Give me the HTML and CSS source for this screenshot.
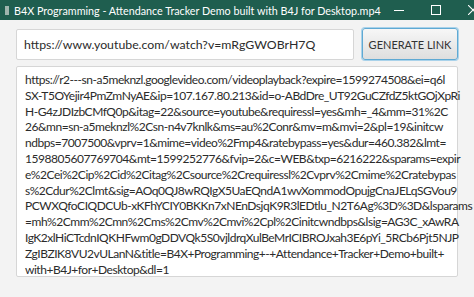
FILE: index.html
```html
<!DOCTYPE html>
<html lang="en">
<head>
    <meta charset="UTF-8">
    <meta name="viewport" content="width=device-width, initial-scale=1.0">
    <title>B4X Programming - Attendance Tracker Demo built with B4J for Desktop.mp4</title>
    <link rel="stylesheet" href="styles.css">
</head>
<body>

<div class="window">
    <!-- Title bar -->
    <div class="title-bar">
        <div class="app-icon"><span class="app-icon-left"></span></div>
        <div class="title-text">B4X Programming - Attendance Tracker Demo built with B4J for Desktop.mp4</div>
        <div class="window-controls">
            <span class="ctrl">
                <svg width="10" height="10" viewBox="0 0 10 10"><path d="M0 5.5h10" stroke="#fff" stroke-width="1"/></svg>
            </span>
            <span class="ctrl">
                <svg width="10" height="10" viewBox="0 0 10 10"><rect x="0.5" y="0.5" width="9" height="9" fill="none" stroke="#fff" stroke-width="1"/></svg>
            </span>
            <span class="ctrl">
                <svg width="10" height="10" viewBox="0 0 10 10"><path d="M0 0L10 10M10 0L0 10" stroke="#fff" stroke-width="1.1"/></svg>
            </span>
        </div>
    </div>

    <!-- Content -->
    <div class="content">
        <div class="url-row">
            <div class="url-input">https://www.youtube.com/watch?v=mRgGWOBrH7Q</div>
            <button class="generate-btn">GENERATE LINK</button>
        </div>

        <div class="result-box">
            <div class="line">https://r2---sn-a5meknzl.googlevideo.com/videoplayback?expire=1599274508&amp;ei=q6l</div>
            <div class="line">SX-T5OYejir4PmZmNyAE&amp;ip=107.167.80.213&amp;id=o-ABdDre_UT92GuCZfdZ5ktGOjXpRi</div>
            <div class="line">H-G4zJDIzbCMfQ0p&amp;itag=22&amp;source=youtube&amp;requiressl=yes&amp;mh=_4&amp;mm=31%2C</div>
            <div class="line">26&amp;mn=sn-a5meknzl%2Csn-n4v7knlk&amp;ms=au%2Conr&amp;mv=m&amp;mvi=2&amp;pl=19&amp;initcw</div>
            <div class="line">ndbps=7007500&amp;vprv=1&amp;mime=video%2Fmp4&amp;ratebypass=yes&amp;dur=460.382&amp;lmt=</div>
            <div class="line">1598805607769704&amp;mt=1599252776&amp;fvip=2&amp;c=WEB&amp;txp=6216222&amp;sparams=expir</div>
            <div class="line">e%2Cei%2Cip%2Cid%2Citag%2Csource%2Crequiressl%2Cvprv%2Cmime%2Cratebypas</div>
            <div class="line">s%2Cdur%2Clmt&amp;sig=AOq0QJ8wRQIgX5UaEQndA1wvXommodOpujgCnaJELqSGVou9</div>
            <div class="line">PCWXQfoCIQDCUb-xKFhYCIY0BKKn7xNEnDsjqK9R3lEDtlu_N2T6Ag%3D%3D&amp;lsparams</div>
            <div class="line">=mh%2Cmm%2Cmn%2Cms%2Cmv%2Cmvi%2Cpl%2Cinitcwndbps&amp;lsig=AG3C_xAwRA</div>
            <div class="line">IgK2xlHiCTcdnIQKHFwm0gDDVQk5S0vjldrqXulBeMrICIBROJxah3E6pYi_5RCb6Pjt5NJP</div>
            <div class="line">ZgIBZIK8VU2vULanN&amp;title=B4X+Programming+-+Attendance+Tracker+Demo+built+</div>
            <div class="line">with+B4J+for+Desktop&amp;dl=1</div>
        </div>
    </div>
</div>

</body>
</html>
```

FILE: styles.css
```css
body {
    margin: 0;
    font-family: Lato, "Open Sans", sans-serif;
    background-color: #f3f3f3;
}
.window {
    width: 474px;
    height: 297px;
    overflow: hidden;
    background-color: #f3f3f3;
}
.title-bar {
    height: 20px;
    background-color: #1f5e4f;
    color: #ffffff;
    display: flex;
    align-items: center;
    padding-left: 5px;
}
.app-icon {
    width: 12px;
    height: 9px;
    background-color: #e9efed;
    display: flex;
}
.app-icon-left {
    width: 4px;
    height: 9px;
    background-color: #9fb5ae;
}
.title-text {
    margin-left: 5px;
    font-size: 10.75px;
    white-space: nowrap;
    flex: 1;
}
.window-controls {
    display: flex;
    align-items: center;
}
.ctrl {
    width: 37px;
    display: flex;
    justify-content: center;
}
.content {
    padding: 9px 16px 0 16px;
}
.url-row {
    display: flex;
    gap: 8px;
}
.url-input {
    flex: 1;
    height: 31px;
    box-sizing: border-box;
    background-color: #ffffff;
    border: 1px solid #d6d6d6;
    border-radius: 2px;
    padding: 0 7px;
    display: flex;
    align-items: center;
    font-size: 12.3px;
    color: #2b2b2b;
}
.generate-btn {
    width: 96px;
    height: 32px;
    margin-top: -1px;
    font-family: Lato, "Open Sans", sans-serif;
    font-size: 11px;
    color: #333333;
    background: linear-gradient(#f7f7f7, #dedede);
    border: 1px solid #5fa9d3;
    box-shadow: 0 0 0 1px #a9d2ea;
    border-radius: 3px;
    padding: 0;
}
.result-box {
    margin-top: 6px;
    height: 211px;
    box-sizing: border-box;
    background-color: #ffffff;
    border: 1px solid #d6d6d6;
    border-radius: 2px;
    padding: 5px 0 0 8px;
    font-size: 12px;
    letter-spacing: -0.47px;
    line-height: 15.8px;
    color: #2b2b2b;
}
.line {
    white-space: nowrap;
}
```
